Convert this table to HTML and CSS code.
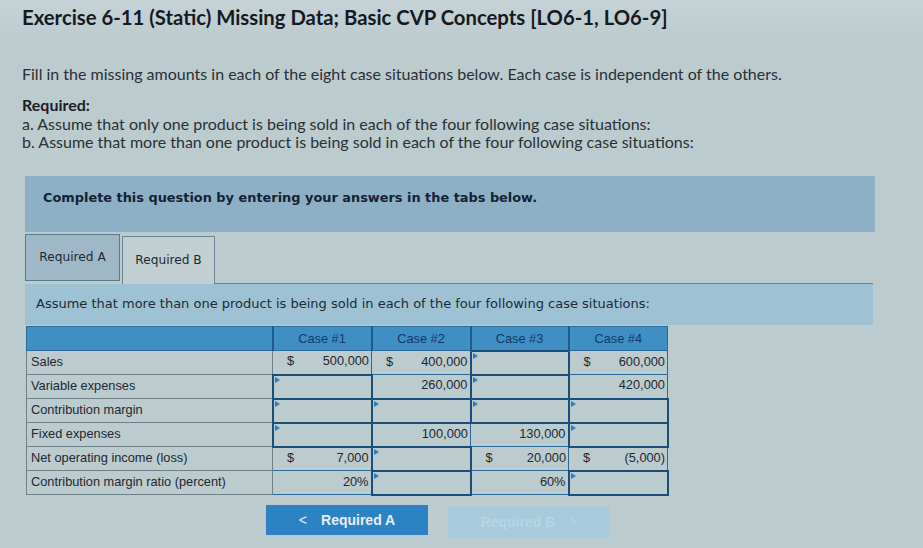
FILE: index.html
```html
<!DOCTYPE html>
<html>
<head>
<meta charset="utf-8">
<link rel="stylesheet" href="styles.css">
</head>
<body>
<div class="page">
  <h1 class="title">Exercise 6-11 (Static) Missing Data; Basic CVP Concepts [LO6-1, LO6-9]</h1>
  <p class="intro">Fill in the missing amounts in each of the eight case situations below. Each case is independent of the others.</p>
  <div class="req">
    <div class="req-head">Required:</div>
    <div>a. Assume that only one product is being sold in each of the four following case situations:</div>
    <div>b. Assume that more than one product is being sold in each of the four following case situations:</div>
  </div>

  <div class="banner">Complete this question by entering your answers in the tabs below.</div>

  <div class="tabs">
    <div class="tab tab-a">Required A</div>
    <div class="tab tab-b">Required B</div>
    <div class="tab-rest"></div>
  </div>
  <div class="band">Assume that more than one product is being sold in each of the four following case situations:</div>

  <table class="grid">
    <colgroup>
      <col class="c-label"><col class="c-case"><col class="c-case"><col class="c-case3"><col class="c-case">
    </colgroup>
    <thead>
      <tr><th></th><th>Case #1</th><th>Case #2</th><th>Case #3</th><th>Case #4</th></tr>
    </thead>
    <tbody>
      <tr>
        <td class="lbl">Sales</td>
        <td class="amt"><div class="cell"><span class="cur">$</span><span class="val">500,000</span></div></td>
        <td class="amt"><div class="cell"><span class="cur">$</span><span class="val">400,000</span></div></td>
        <td class="inp"></td>
        <td class="amt"><div class="cell"><span class="cur">$</span><span class="val">600,000</span></div></td>
      </tr>
      <tr>
        <td class="lbl">Variable expenses</td>
        <td class="inp"></td>
        <td class="amt"><div class="cell"><span class="val">260,000</span></div></td>
        <td class="inp"></td>
        <td class="amt"><div class="cell"><span class="val">420,000</span></div></td>
      </tr>
      <tr>
        <td class="lbl">Contribution margin</td>
        <td class="inp"></td>
        <td class="inp"></td>
        <td class="inp"></td>
        <td class="inp"></td>
      </tr>
      <tr>
        <td class="lbl">Fixed expenses</td>
        <td class="inp"></td>
        <td class="amt"><div class="cell"><span class="val">100,000</span></div></td>
        <td class="amt"><div class="cell"><span class="val">130,000</span></div></td>
        <td class="inp"></td>
      </tr>
      <tr>
        <td class="lbl">Net operating income (loss)</td>
        <td class="amt"><div class="cell"><span class="cur">$</span><span class="val">7,000</span></div></td>
        <td class="inp"></td>
        <td class="amt"><div class="cell"><span class="cur">$</span><span class="val">20,000</span></div></td>
        <td class="amt"><div class="cell"><span class="cur">$</span><span class="val">(5,000)</span></div></td>
      </tr>
      <tr>
        <td class="lbl">Contribution margin ratio (percent)</td>
        <td class="amt"><div class="cell"><span class="val">20%</span></div></td>
        <td class="inp"></td>
        <td class="amt"><div class="cell"><span class="val">60%</span></div></td>
        <td class="inp"></td>
      </tr>
    </tbody>
  </table>

  <div class="nav">
    <button class="btn btn-prev"><span class="chev">&lt;</span>Required A</button>
    <button class="btn btn-next" disabled>Required B<span class="chev-r">&gt;</span></button>
  </div>
</div>
</body>
</html>
```

FILE: styles.css
```css
html, body {
  margin: 0;
  padding: 0;
}
body {
  background: #bccbce;
  width: 923px;
  height: 548px;
  overflow: hidden;
  font-family: "Lato", "Liberation Sans", sans-serif;
  color: #252c33;
}
.title {
  margin: 0;
  padding: 5px 0 0 22px;
  height: 32px;
  box-sizing: border-box;
  font-family: "Lato", sans-serif;
  font-weight: 700;
  font-size: 20.3px;
  line-height: 24px;
  color: #16191f;
  background: linear-gradient(#c6d3d6, #bfcdd0);
}
.intro {
  margin: 33px 0 0 22px;
  font-size: 16px;
  line-height: 18px;
  color: #2a3036;
}
.req {
  margin: 13px 0 0 22px;
  font-size: 16px;
  line-height: 18.5px;
  color: #2a3036;
}
.req-head {
  font-weight: 700;
  color: #1b2026;
}
.banner {
  margin: 24px 48px 0 25px;
  height: 56px;
  box-sizing: border-box;
  padding: 14px 0 0 18px;
  background: #8db0c6;
  font-family: "DejaVu Sans", Verdana, sans-serif;
  font-weight: 700;
  font-size: 12.9px;
  line-height: 16px;
  color: #152233;
}
.tabs {
  display: flex;
  align-items: flex-end;
  margin: 0 50px 0 25px;
  height: 52px;
}
.tab {
  font-family: "DejaVu Sans", Verdana, sans-serif;
  font-size: 12.2px;
  color: #1f2833;
  box-sizing: border-box;
  display: flex;
  align-items: center;
  justify-content: center;
}
.tab-a {
  width: 95px;
  height: 47px;
  margin-bottom: 3px;
  background: #9fb8c8;
  border: 1px solid #5c7a8e;
}
.tab-b {
  width: 93px;
  height: 48px;
  margin-left: 2px;
  background: #c2d0d3;
  border: 1px solid #6a8494;
  border-bottom: none;
}
.tab-rest {
  flex: 1;
  height: 1px;
  background: #6a8494;
}
.band {
  margin: 0 50px 0 25px;
  height: 41px;
  box-sizing: border-box;
  padding: 12px 0 0 11px;
  background: #9ec2d4;
  font-family: "DejaVu Sans", Verdana, sans-serif;
  font-size: 13px;
  line-height: 16px;
  color: #1d2a36;
}
.grid {
  margin: 1px 0 0 26px;
  border-collapse: collapse;
  table-layout: fixed;
  width: 641px;
  font-family: "Liberation Sans", Arial, sans-serif;
  font-size: 12.8px;
  color: #1e2830;
}
.c-label { width: 246px; }
.c-case { width: 99px; }
.c-case3 { width: 98px; }
.grid thead th {
  height: 22px;
  background: #3f8ec4;
  color: #133a66;
  font-weight: 400;
  font-size: 12.8px;
  border: 1px solid #2a6b9c;
  border-left: 2px solid #1e5a8a;
  padding: 1px 0 0 0;
}
.grid thead th:first-child {
  border-left: 1px solid #2a6b9c;
}
.grid tbody td {
  height: 19px;
  padding: 0 0 3px 0;
  border: 1px solid #2a6a98;
}
.grid td.lbl {
  border: 1px solid #6e8088;
  padding-left: 4px;
  white-space: nowrap;
}
.grid td.amt {
  padding-right: 2px;
}
.cell {
  display: flex;
  align-items: center;
}
.cur {
  padding-left: 14px;
}
.val {
  margin-left: auto;
}
.grid td.inp {
  border: 2px solid #1c4c78;
  position: relative;
}
.grid td.inp::before {
  content: "";
  position: absolute;
  left: 1px;
  top: 1px;
  border-left: 5px solid #2a7fc0;
  border-top: 3px solid transparent;
  border-bottom: 3px solid transparent;
}
.nav {
  display: flex;
  margin: 9px 0 0 266px;
  gap: 20px;
}
.btn {
  width: 162px;
  height: 30px;
  border: none;
  font-family: "Liberation Sans", Arial, sans-serif;
  font-weight: 700;
  font-size: 14px;
  padding: 0;
  display: flex;
  align-items: center;
  justify-content: center;
}
.btn-prev {
  background: #2b83c4;
  color: #e6eef6;
}
.chev {
  font-weight: 400;
  margin-right: 14px;
  font-size: 14px;
}
.btn-next {
  margin-top: 2px;
  background: #a7cadc;
  color: #b9d5e3;
}
.chev-r {
  margin-left: 14px;
  font-weight: 400;
}
```
